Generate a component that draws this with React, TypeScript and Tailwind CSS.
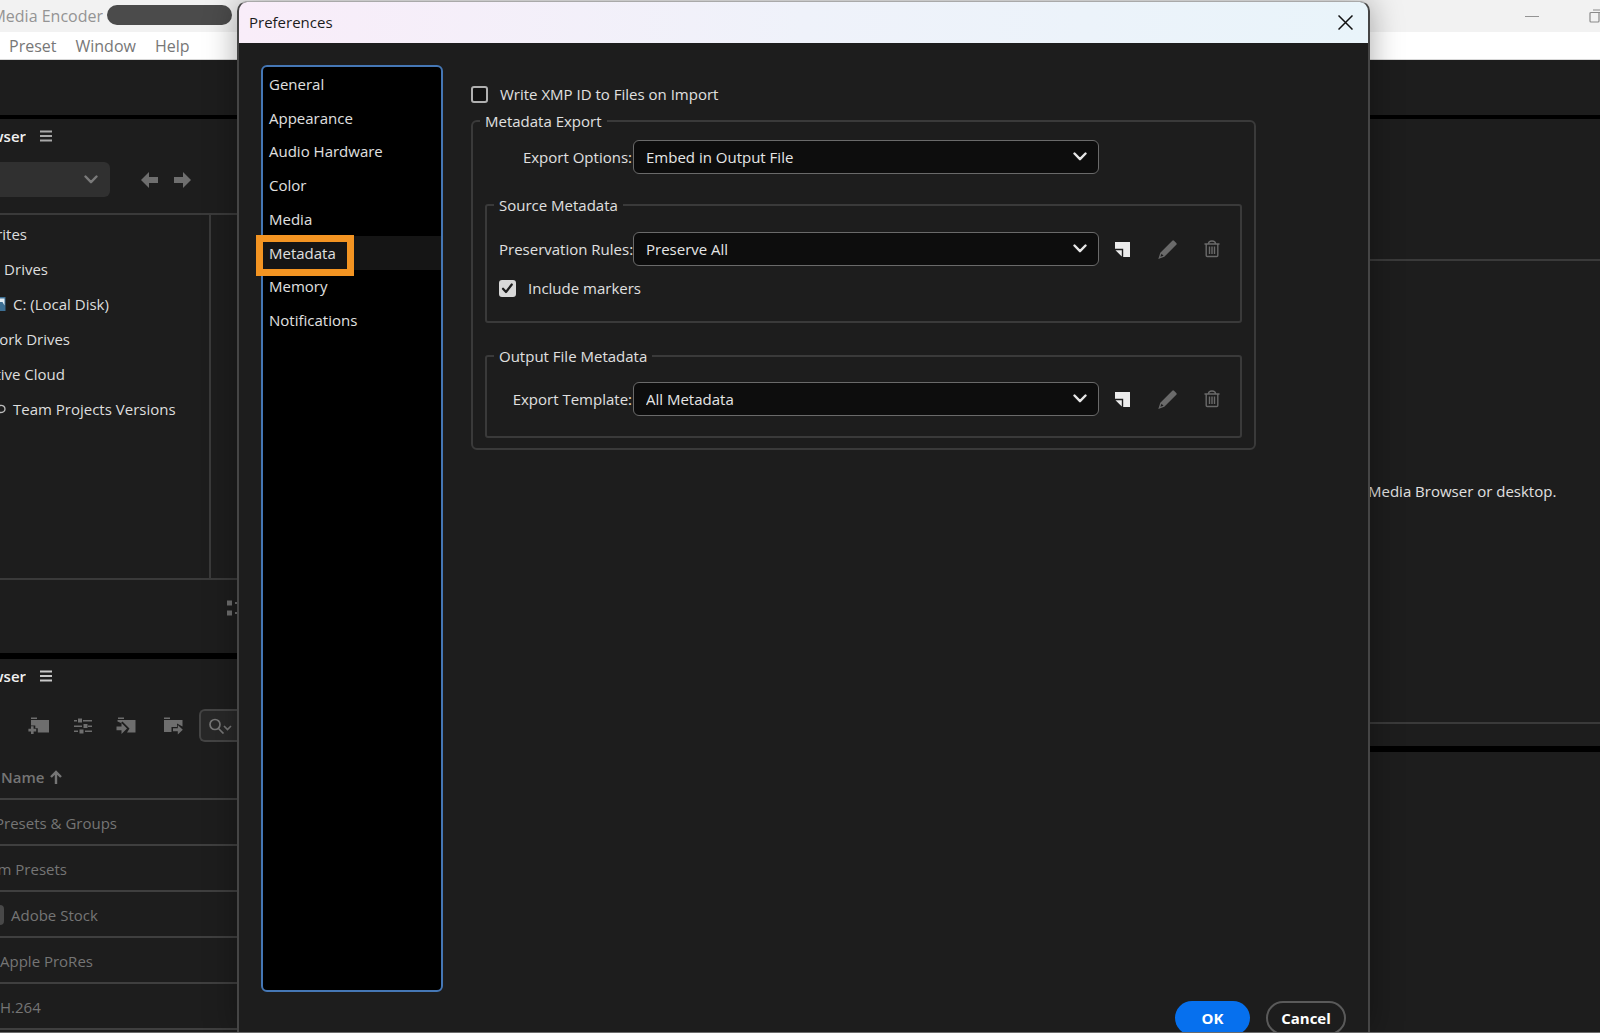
import { useState } from "react";
import type { ReactNode } from "react";

const categories = [
  "General",
  "Appearance",
  "Audio Hardware",
  "Color",
  "Media",
  "Metadata",
  "Memory",
  "Notifications",
];

// Text that is pushed against the left side of the window
const Clipped = ({ className, children }: { className: string; children: ReactNode }) => (
  <span className={`flex shrink-0 justify-end overflow-hidden whitespace-nowrap ${className}`}>
    <span>{children}</span>
  </span>
);

const MenuLines = ({ className }: { className: string }) => (
  <svg viewBox="0 0 12 12" className={`h-3 w-3 ${className}`} fill="currentColor">
    <path d="M0 0.5h12v2H0zM0 5h12v2H0zM0 9.5h12v2H0z" />
  </svg>
);

const Chevron = ({ className }: { className: string }) => (
  <svg
    viewBox="0 0 14 9"
    className={`h-[9px] w-[14px] ${className}`}
    fill="none"
    stroke="currentColor"
    strokeWidth="2.4"
    strokeLinecap="round"
    strokeLinejoin="round"
  >
    <path d="M1.5 1.5L7 7.2l5.5-5.7" />
  </svg>
);

const BlockArrow = ({ flip }: { flip?: boolean }) => (
  <svg viewBox="0 0 17 16" className={flip ? "h-4 w-[17px] rotate-180" : "h-4 w-[17px]"} fill="#6e6e6e">
    <path d="M0 8L8 0v5h9v6H8v5z" />
  </svg>
);

const NewIcon = () => (
  <svg viewBox="0 0 15 15" className="h-[15px] w-[15px]">
    <path d="M0 0h15v15H8.200V6.800H0z" fill="#ececec" />
    <path d="M0.500 8.300h6.300V14.500z" fill="#ececec" />
  </svg>
);

const PencilIcon = () => (
  <svg viewBox="0 0 19 19" className="h-[19px] w-[19px]" fill="#6a6a6a">
    <path
      fillRule="evenodd"
      d="M14.300 0.800a1.200 1.200 0 0 1 1.700 0l2.300 2.300a1.200 1.200 0 0 1 0 1.700L6.300 16.800 0.300 18.900 2.300 12.800zM3.500 13.700L2.400 16.800 5.500 15.700z"
    />
  </svg>
);

const TrashIcon = () => (
  <svg viewBox="0 0 16 18" className="h-[18px] w-4" fill="none" stroke="#6a6a6a" strokeWidth="1.400">
    <path d="M0.500 4h15M4.500 4c0-4 7-4 7 0M2.200 4v11.500a1 1 0 0 0 1 1h9.600a1 1 0 0 0 1-1V4M5.500 6.500v7.500M8 6.500v7.500M10.500 6.500v7.500" />
  </svg>
);

const FolderAdd = () => (
  <svg viewBox="0 0 21 18" className="h-[18px] w-[21px]" fill="#6e6e6e">
    <path d="M3 0.500h6V2H3zM3 3h18v12.500H9.800V11.300H7.300V8.500H3z" />
    <path d="M3 9.200h2.600v2.600h2.600v2.600H5.600V17H3v-2.600H0.400v-2.600H3z" />
  </svg>
);

const Sliders = () => (
  <svg viewBox="0 0 18 16" className="h-4 w-[18px]" fill="#6e6e6e">
    <path d="M0 2h3v1.500H0zM9 2h9v1.500H9zM4 0.500h4v4H4zM0 7.500h8v1.500H0zM14 7.500h4v1.500h-4zM9.500 6h4v4h-4zM0 12.500h4v1.500H0zM11 12.500h7v1.500h-7zM5.500 11.500h4v4h-4z" />
  </svg>
);

const FolderImport = () => (
  <svg viewBox="0 0 20 18" className="h-[18px] w-5" fill="#6e6e6e">
    <path d="M2 0.500h6V2H2zM1.500 3h18V15.500H11l2.500-4L6.500 4.500 5 6 1.500 4.500z" />
    <path d="M0.500 9.500h5V6L11 11.500l-5.500 5.500V13.300h-5z" />
  </svg>
);

const FolderExport = () => (
  <svg viewBox="0 0 20 18" className="h-[18px] w-5" fill="#6e6e6e">
    <path d="M1 0.500h6V2H1zM1 3h18.500v6.500L14 6.500v3.500H8.500v5H1z" />
    <path d="M10 11.200h4.800V8l5 4.700-5 4.700V14.200H10z" />
  </svg>
);

const Dropdown = ({ id, label, options }: { id: string; label: string; options: string[] }) => (
  <>
    <label htmlFor={id} className="w-[133px] shrink-0 whitespace-nowrap text-right">
      {label}
    </label>
    <div className="relative ml-px max-w-[466px] flex-1">
      <select
        id={id}
        className="h-[34px] w-full appearance-none rounded-md border border-[#6a6a6a] bg-[#0d0d0d] px-3 text-[#e6e6e6] outline-none"
      >
        {options.map((option) => (
          <option key={option}>{option}</option>
        ))}
      </select>
      <Chevron className="pointer-events-none absolute right-3 top-3 text-[#e6e6e6]" />
    </div>
  </>
);

const RowActions = () => (
  <div className="ml-4 flex shrink-0 items-center">
    <button aria-label="New" className="mr-7">
      <NewIcon />
    </button>
    <button aria-label="Edit" className="mr-[27px]">
      <PencilIcon />
    </button>
    <button aria-label="Delete">
      <TrashIcon />
    </button>
  </div>
);

const CheckBox = ({
  label,
  checked,
  onChange,
}: {
  label: string;
  checked: boolean;
  onChange: (checked: boolean) => void;
}) => (
  <label className="flex items-center gap-3">
    <span className="relative flex">
      <input
        type="checkbox"
        checked={checked}
        onChange={(e) => onChange(e.target.checked)}
        className="h-[17px] w-[17px] appearance-none rounded-[3px] border-2 border-[#b0b0b0] bg-[#111] checked:border-[#d8d8d8] checked:bg-[#d8d8d8]"
      />
      {checked && (
        <svg
          viewBox="0 0 17 17"
          className="pointer-events-none absolute inset-0"
          fill="none"
          stroke="#1d1d1d"
          strokeWidth="2.2"
          strokeLinecap="round"
          strokeLinejoin="round"
        >
          <path d="M4 8.700l3 3.300 5.800-7.500" />
        </svg>
      )}
    </span>
    {label}
  </label>
);

const MediaBrowser = () => (
  <section className="flex h-[534px] flex-col">
    <div className="flex h-[34px] items-center">
      <Clipped className="w-[26px] font-semibold text-[#f0f0f0]">wser</Clipped>
      <MenuLines className="ml-[14px] text-[#a8a8a8]" />
    </div>
    <div className="flex h-[60px] items-center pb-[7px]">
      <button aria-label="Location" className="flex h-[35px] w-[110px] items-center justify-end rounded-r-md bg-[#303030] pr-3">
        <Chevron className="text-[#7a7a7a]" />
      </button>
      <button aria-label="Back" className="ml-[31px]">
        <BlockArrow />
      </button>
      <button aria-label="Forward" className="ml-4">
        <BlockArrow flip />
      </button>
    </div>
    <div className="flex h-[367px] border-y-2 border-[#3a3a3a]">
      <ul className="w-[211px] border-r-2 border-[#3a3a3a] pt-px text-[#dedede] *:flex *:h-[35px] *:items-center *:whitespace-nowrap">
        <li>
          <Clipped className="w-[27px]">rites</Clipped>
        </li>
        <li>
          <Clipped className="w-12">l Drives</Clipped>
        </li>
        <li>
          <svg viewBox="0 0 6 14" className="mr-[7px] h-[14px] w-[6px]">
            <path d="M0 0h5.500v14H0z" fill="#3c6f94" />
            <path d="M0 1.500h4.500v7L2.500 5H0z" fill="#e4eef5" />
          </svg>
          C: (Local Disk)
        </li>
        <li>
          <Clipped className="w-[70px]">work Drives</Clipped>
        </li>
        <li>
          <Clipped className="w-[65px]">tive Cloud</Clipped>
        </li>
        <li>
          <svg viewBox="0 0 6 10" className="mr-[7px] h-[10px] w-[6px]" fill="none" stroke="#bdbdbd" strokeWidth="1.300">
            <path d="M0 1.500c3-0.500 5 1 5 3.500s-2 3.500-5 3.500" />
          </svg>
          Team Projects Versions
        </li>
      </ul>
    </div>
    <div className="flex h-[56px] items-center justify-end">
      <svg viewBox="0 0 11 16" className="h-4 w-[11px]" fill="#6e6e6e">
        <path d="M0 0.500h5v5H0zM0 10.500h5v5H0zM8 2h3v2H8zM8 12h3v2H8z" />
      </svg>
    </div>
  </section>
);

const PresetBrowser = () => (
  <section className="flex flex-1 flex-col text-[#757575]">
    <div className="flex h-[34px] items-center">
      <Clipped className="w-[26px] font-semibold text-[#f0f0f0]">wser</Clipped>
      <MenuLines className="ml-[14px] text-[#c8c8c8]" />
    </div>
    <div className="flex h-[65px] items-center overflow-hidden pl-7">
      <button aria-label="New preset group">
        <FolderAdd />
      </button>
      <button aria-label="Preset settings" className="ml-[25px]">
        <Sliders />
      </button>
      <button aria-label="Import presets" className="ml-6">
        <FolderImport />
      </button>
      <button aria-label="Export presets" className="ml-[27px]">
        <FolderExport />
      </button>
      <button aria-label="Search" className="ml-4 flex h-[33px] flex-1 items-center rounded-l-md border-2 border-r-0 border-[#444] bg-[#282828] pl-2">
        <svg viewBox="0 0 24 16" className="h-4 w-6" fill="none" stroke="#777" strokeWidth="1.700">
          <path d="M11 6.500a5 5 0 1 1-10 0a5 5 0 1 1 10 0zM9.500 10.500l5 5M15 8l3.500 3.500L22 8" />
        </svg>
      </button>
    </div>
    <div className="flex h-[42px] items-center border-b-2 border-[#3f3f3f] pb-[3px] pl-px font-semibold">
      Name
      <svg viewBox="0 0 12 14" className="ml-[6px] h-[14px] w-3" fill="none" stroke="currentColor" strokeWidth="2.400">
        <path d="M6 14V2M1 7l5-5 5 5" />
      </svg>
    </div>
    <ul className="*:flex *:h-[46px] *:items-center *:whitespace-nowrap *:border-b-2 *:border-[#3f3f3f] *:pt-[2px]">
      <li>
        <Clipped className="w-[117px]">Presets &amp; Groups</Clipped>
      </li>
      <li>
        <Clipped className="w-[67px]">m Presets</Clipped>
      </li>
      <li>
        <span className="mr-[7px] h-5 w-1 rounded-r bg-[#484848]" />
        Adobe Stock
      </li>
      <li>Apple ProRes</li>
      <li>H.264</li>
    </ul>
  </section>
);

const Preferences = () => {
  const [selected, setSelected] = useState("Metadata");
  const [writeXmp, setWriteXmp] = useState(false);
  const [includeMarkers, setIncludeMarkers] = useState(true);

  return (
    <div
      role="dialog"
      aria-label="Preferences"
      className="absolute bottom-0 left-[237px] right-[230px] top-px flex flex-col overflow-hidden rounded-t-[10px] border-x-2 border-t border-[#454545] border-t-[#a9a9a9] bg-[#1d1d1d] shadow-[0_0_32px_rgba(0,0,0,0.35)]"
    >
      <header className="flex h-[41px] shrink-0 items-center justify-between bg-linear-to-r from-[#f9edf9] via-[#eff2fa] to-[#e9f4fa] pb-px pl-[10px] pr-[15px]">
        <h1 className="text-[15px] font-normal text-[#1b1b1b]">Preferences</h1>
        <button aria-label="Close">
          <svg viewBox="0 0 15 15" className="h-[15px] w-[15px]" stroke="#111" strokeWidth="1.500">
            <path d="M0.500 0.500l14 14M14.500 0.500l-14 14" />
          </svg>
        </button>
      </header>
      <div className="flex min-h-0 flex-1 px-[22px] pt-[22px]">
        <nav className="relative mb-10 w-[182px] shrink-0 rounded-md border-2 border-[#4577b5] bg-black">
          <ul className="grid h-[270px] grid-rows-8">
            {categories.map((category) => (
              <li key={category} className={category === selected ? "flex bg-[#151515]" : "flex"}>
                <button className="flex-1 px-[6px] text-left" onClick={() => setSelected(category)}>
                  {category}
                </button>
              </li>
            ))}
          </ul>
          <div className="pointer-events-none absolute -left-[7px] top-[168px] h-[41px] w-[98px] border-[7px] border-[#f39422]" />
        </nav>
        <div className="ml-7 flex min-w-0 flex-1 flex-col">
          <div className="mt-[19px]">
            <CheckBox label="Write XMP ID to Files on Import" checked={writeXmp} onChange={setWriteXmp} />
          </div>
          <fieldset className="mr-[90px] mt-[7px] rounded-md border-2 border-[#3a3a3a] px-3 pb-[10px]">
            <legend className="-ml-[5px] h-5 px-[5px] leading-5">Metadata Export</legend>
            <div className="flex items-center pl-[14px] pt-[9px]">
              <Dropdown
                id="export-options"
                label="Export Options:"
                options={["Embed in Output File", "Create Sidecar File", "None"]}
              />
            </div>
            <fieldset className="mt-[21px] rounded-[3px] border-2 border-[#3a3a3a] px-3 pb-[23px]">
              <legend className="-ml-[5px] h-5 px-[5px] leading-5">Source Metadata</legend>
              <div className="flex items-center pt-[17px]">
                <Dropdown
                  id="preservation-rules"
                  label="Preservation Rules:"
                  options={["Preserve All", "Exclude All"]}
                />
                <RowActions />
              </div>
              <div className="mt-3">
                <CheckBox label="Include markers" checked={includeMarkers} onChange={setIncludeMarkers} />
              </div>
            </fieldset>
            <fieldset className="mt-[23px] rounded-[3px] border-2 border-[#3a3a3a] px-3 pb-5">
              <legend className="-ml-[5px] h-5 px-[5px] leading-5">Output File Metadata</legend>
              <div className="flex items-center pt-4">
                <Dropdown
                  id="export-template"
                  label="Export Template:"
                  options={["All Metadata", "Minimal Metadata"]}
                />
                <RowActions />
              </div>
            </fieldset>
          </fieldset>
          <div className="mt-auto flex h-[31px] shrink-0 justify-end gap-4 font-bold text-white">
            <button className="h-[34px] w-[75px] rounded-full bg-[#0670ee]">OK</button>
            <button className="h-[34px] w-20 rounded-full border-2 border-[#5a5a5a]">Cancel</button>
          </div>
        </div>
      </div>
    </div>
  );
};

const App = () => {
  return (
    <div className="relative flex h-screen flex-col overflow-hidden border-b border-[#6b6b6b] bg-[#1d1d1d] font-['Open_Sans',sans-serif] text-[15px] font-medium leading-5 text-[#e0e0e0]">
      <header className="flex h-8 shrink-0 items-center justify-between bg-[#f2f2f2] text-base font-normal text-[#949494]">
        <div className="flex items-center">
          <Clipped className="w-[103px]">Media Encoder</Clipped>
          <span className="mb-[2px] ml-1 h-5 w-[125px] rounded-full bg-[#4b4b4b]" />
        </div>
        <div className="flex items-center gap-[50px]">
          <button aria-label="Minimize" className="h-px w-[14px] bg-[#949494]" />
          <button aria-label="Restore">
            <svg viewBox="0 0 11 14" className="h-[14px] w-[11px]" fill="none" stroke="#8a8a8a" strokeWidth="1.200">
              <path d="M11 3.500H2a1 1 0 0 0-1 1V12a1 1 0 0 0 1 1h7a1 1 0 0 0 1-1V3.500M4 1h7" />
            </svg>
          </button>
        </div>
      </header>
      <nav className="flex h-7 shrink-0 items-center gap-[19px] border-b border-[#d8d8d8] bg-white pl-[9px] text-base font-normal text-[#777]">
        <button>Preset</button>
        <button>Window</button>
        <button>Help</button>
      </nav>
      <div className="h-[55px] shrink-0" />
      <main className="flex min-h-0 flex-1 justify-between border-t-4 border-black">
        <div className="flex w-[238px] flex-col">
          <MediaBrowser />
          <div className="h-[6px] shrink-0 bg-black" />
          <PresetBrowser />
        </div>
        <section className="flex w-[232px] flex-col">
          <div className="h-[142px] shrink-0 border-b-2 border-[#3a3a3a]" />
          <p className="flex h-[463px] shrink-0 items-center whitespace-nowrap border-b-2 border-[#3a3a3a] pb-[2px]">
            Media Browser or desktop.
          </p>
          <div className="h-[22px] shrink-0" />
          <div className="h-[6px] shrink-0 bg-black" />
        </section>
      </main>
      <Preferences />
    </div>
  );
};

export default App;
